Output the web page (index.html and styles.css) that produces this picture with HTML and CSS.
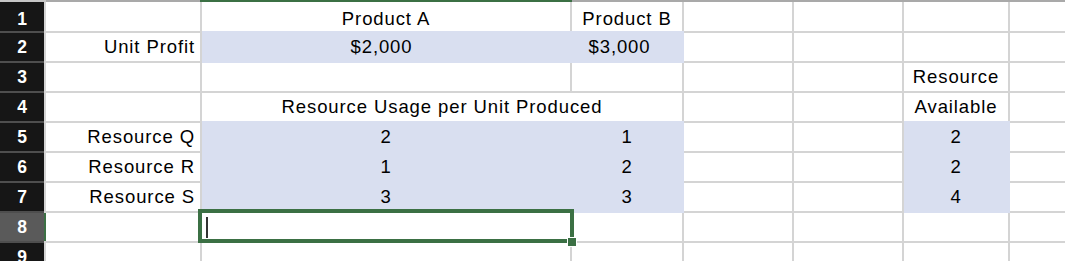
FILE: index.html
```html
<!DOCTYPE html>
<html>
<head>
<meta charset="utf-8">
<link rel="stylesheet" href="styles.css">
</head>
<body>
<div class="sheet">
  <div class="strip">
    <div class="strip-hdr"></div>
    <div></div>
    <div class="strip-sel"></div>
    <div></div><div></div><div></div><div></div><div></div>
  </div>
  <div class="grid">
    <div class="hdr t1">1</div><div class="cell"></div><div class="cell c t1">Product A</div><div class="cell c t1">Product B</div><div class="cell"></div><div class="cell"></div><div class="cell"></div><div class="cell"></div>
    <div class="hdr">2</div><div class="cell r">Unit Profit</div><div class="cell c fill cur-a">$2,000</div><div class="cell c fill cur-b">$3,000</div><div class="cell"></div><div class="cell"></div><div class="cell"></div><div class="cell"></div>
    <div class="hdr">3</div><div class="cell"></div><div class="cell"></div><div class="cell"></div><div class="cell"></div><div class="cell"></div><div class="cell c">Resource</div><div class="cell"></div>
    <div class="hdr">4</div><div class="cell"></div><div class="cell c span2">Resource Usage per Unit Produced</div><div class="cell"></div><div class="cell"></div><div class="cell c">Available</div><div class="cell"></div>
    <div class="hdr">5</div><div class="cell r">Resource Q</div><div class="cell c fill">2</div><div class="cell c fill">1</div><div class="cell"></div><div class="cell"></div><div class="cell c fill">2</div><div class="cell"></div>
    <div class="hdr">6</div><div class="cell r">Resource R</div><div class="cell c fill">1</div><div class="cell c fill">2</div><div class="cell"></div><div class="cell"></div><div class="cell c fill">2</div><div class="cell"></div>
    <div class="hdr">7</div><div class="cell r">Resource S</div><div class="cell c fill">3</div><div class="cell c fill">3</div><div class="cell"></div><div class="cell"></div><div class="cell c fill">4</div><div class="cell"></div>
    <div class="hdr hdr-sel">8</div><div class="cell"></div><div class="cell active"><span class="caret"></span><span class="handle"></span></div><div class="cell"></div><div class="cell"></div><div class="cell"></div><div class="cell"></div><div class="cell"></div>
    <div class="hdr">9</div><div class="cell"></div><div class="cell"></div><div class="cell"></div><div class="cell"></div><div class="cell"></div><div class="cell"></div><div class="cell"></div>
  </div>
</div>
</body>
</html>
```

FILE: styles.css
```css
html, body {
  margin: 0;
  padding: 0;
  background: #ffffff;
  overflow: hidden;
}

.sheet {
  width: 1065px;
  height: 261px;
  overflow: hidden;
  font-family: "Liberation Sans", Arial, sans-serif;
}

.strip,
.grid {
  display: grid;
  grid-template-columns: 44px 154px 368px 110px 108px 108px 104px 1fr;
  column-gap: 2px;
}

.strip {
  height: 2px;
  background: #a9a9a9;
}

.strip-hdr {
  background: #c6c6c6;
  box-shadow: 2px 0 0 #c6c6c6;
}

.strip-sel {
  background: #3b7044;
  box-shadow: -2px 0 0 #3b7044, 2px 0 0 #3b7044;
}

.grid {
  grid-template-rows: 29px repeat(8, 28px);
  row-gap: 2px;
  background: #d4d4d4;
}

.hdr {
  background: #161616;
  color: #ffffff;
  font-weight: bold;
  font-size: 17.5px;
  display: flex;
  justify-content: center;
  align-items: flex-end;
  padding-bottom: 3px;
  box-sizing: border-box;
  box-shadow: 0 2px 0 #4e4e4e;
}

.hdr-sel {
  background: #5a5a5a;
  box-shadow: 0 2px 0 #4e4e4e, 2px 0 0 #3b7044;
}

.cell {
  background: #ffffff;
  color: #000000;
  font-size: 18.5px;
  letter-spacing: 0.9px;
  white-space: nowrap;
  display: flex;
  align-items: flex-end;
  padding: 0 5px 3px;
  box-sizing: border-box;
  min-width: 0;
}

.t1 {
  padding-bottom: 1px;
}

.r {
  justify-content: flex-end;
}

.c {
  justify-content: center;
}

.span2 {
  grid-column: span 2;
}

.fill {
  background: #d9dff0;
  box-shadow: 2px 0 0 #d9dff0, 0 2px 0 #d9dff0, 2px 2px 0 #d9dff0,
    0 -2px 0 #d9dff0, 2px -2px 0 #d9dff0;
}

.cur-a {
  padding-right: 14px;
}

.cur-b {
  padding-right: 20px;
}

.active {
  position: relative;
}

.active::after {
  content: "";
  position: absolute;
  left: -4px;
  top: -4px;
  right: -4px;
  bottom: -2px;
  border: 4px solid #3b7044;
  z-index: 1;
}

.caret {
  position: absolute;
  left: 4px;
  top: 4px;
  width: 2px;
  height: 21px;
  background: #333333;
  z-index: 2;
}

.handle {
  position: absolute;
  right: -7px;
  bottom: -6px;
  width: 8px;
  height: 8px;
  background: #3b7044;
  border: 1px solid #ffffff;
  z-index: 2;
}
```
